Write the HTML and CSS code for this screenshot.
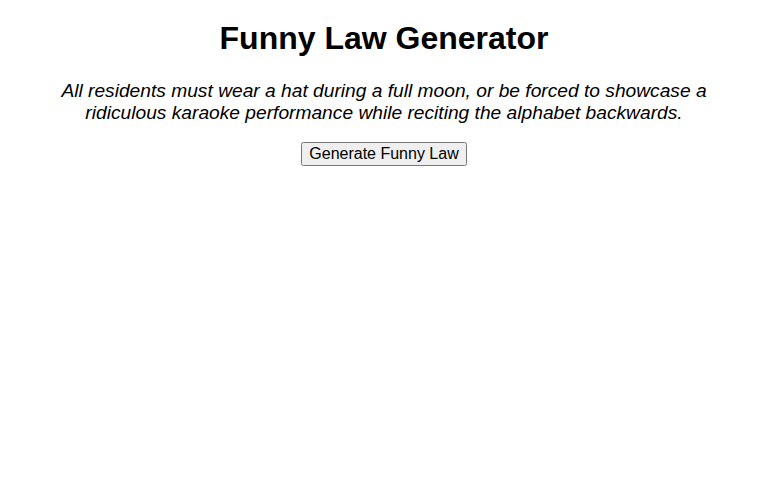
FILE: index.html
```html
<!DOCTYPE html>
<html lang="en">
<head>
<meta charset="utf-8">
<title>Funny Law Generator</title>
<link rel="stylesheet" href="styles.css">
</head>
<body>
  <main class="app">
    <h1 class="title">Funny Law Generator</h1>
    <p class="law">All residents must wear a hat during a full moon, or be forced to showcase a ridiculous karaoke performance while reciting the alphabet backwards.</p>
    <button class="generate" type="button">Generate Funny Law</button>
  </main>
</body>
</html>
```

FILE: styles.css
```css
body {
  margin: 0;
  background: #fff;
  color: #000;
  font-family: "Liberation Sans", Arial, sans-serif;
}

.app {
  padding: 20px 20px 0;
  text-align: center;
}

.title {
  margin: 0 0 23px;
  font-size: 32px;
  font-weight: bold;
}

.law {
  max-width: 700px;
  margin: 0 auto 18px;
  font-size: 1.2em;
  font-style: italic;
}

.generate {
  font-family: "Liberation Sans", Arial, sans-serif;
  font-size: 16px;
}
```
